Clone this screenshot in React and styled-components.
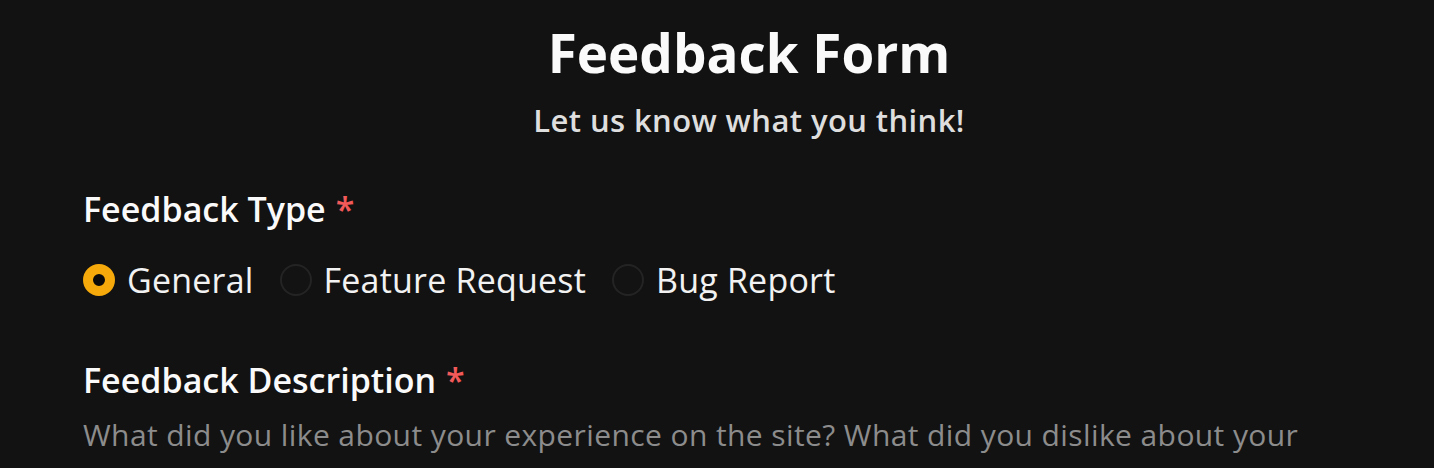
import * as React from 'react';
import styled, { createGlobalStyle } from 'styled-components';

const GlobalStyle = createGlobalStyle`
  html, body {
    margin: 0;
    background: #121212;
    font-family: "Open Sans", "Noto Sans", sans-serif;
  }
`;

const Page = styled.div`
  height: 468px;
  overflow: hidden;
  background: #121212;
  padding: 21px 19px 0 83px;
  box-sizing: border-box;
`;

const Header = styled.header`
  display: flex;
  flex-direction: column;
  align-items: center;
  margin-bottom: 47px;
`;

const Title = styled.h1`
  margin: 0;
  font-size: 53px;
  line-height: 64px;
  font-weight: 700;
  color: #fafafa;
`;

const Subtitle = styled.p`
  margin: 15px 0 0;
  font-size: 31px;
  line-height: 40px;
  font-weight: 600;
  letter-spacing: 0.4px;
  color: #dedede;
`;

const Field = styled.div`
  margin-bottom: 56px;
`;

const Label = styled.label`
  display: block;
  margin-bottom: ${(p) => p.$gap}px;
  font-size: 34px;
  line-height: 44px;
  font-weight: 600;
  color: #fafafa;
`;

const Required = styled.span`
  color: #f25a5a;
  margin-left: 10px;
`;

const Options = styled.div`
  display: flex;
  align-items: center;
  gap: 26px;
`;

const Option = styled.label`
  display: flex;
  align-items: center;
  gap: 12px;
  font-size: 34px;
  line-height: 44px;
  letter-spacing: 0.2px;
  color: #f2f2f2;
  cursor: pointer;
`;

const Radio = styled.input.attrs({ type: 'radio' })`
  appearance: none;
  margin: 0;
  width: 32px;
  height: 32px;
  border-radius: 50%;
  box-sizing: border-box;
  border: 2px solid #242424;
  background: #131313;
  cursor: pointer;

  &:checked {
    border: 10px solid #f5a90a;
    background: #0a0a0a;
  }
`;

const Description = styled.textarea`
  display: block;
  width: 100%;
  height: 96px;
  padding: 0;
  border: 0;
  outline: none;
  resize: none;
  background: transparent;
  font-family: inherit;
  font-size: 30px;
  line-height: 48px;
  letter-spacing: 0.4px;
  color: #f2f2f2;

  &::placeholder {
    color: #8c8c8c;
  }
`;

const types = ['General', 'Feature Request', 'Bug Report'];

export default function App() {
  const [type, setType] = React.useState('General');

  return (
    <Page>
      <GlobalStyle />
      <Header>
        <Title>Feedback Form</Title>
        <Subtitle>Let us know what you think!</Subtitle>
      </Header>

      <Field role="radiogroup">
        <Label as="div" $gap={27}>
          Feedback Type<Required>*</Required>
        </Label>
        <Options>
          {types.map((t) => (
            <Option key={t}>
              <Radio
                name="type"
                value={t}
                checked={type === t}
                onChange={() => setType(t)}
              />
              {t}
            </Option>
          ))}
        </Options>
      </Field>

      <Field>
        <Label htmlFor="description" $gap={9}>
          Feedback Description<Required>*</Required>
        </Label>
        <Description
          id="description"
          placeholder="What did you like about your experience on the site? What did you dislike about your experience on the site?"
        />
      </Field>
    </Page>
  );
}
